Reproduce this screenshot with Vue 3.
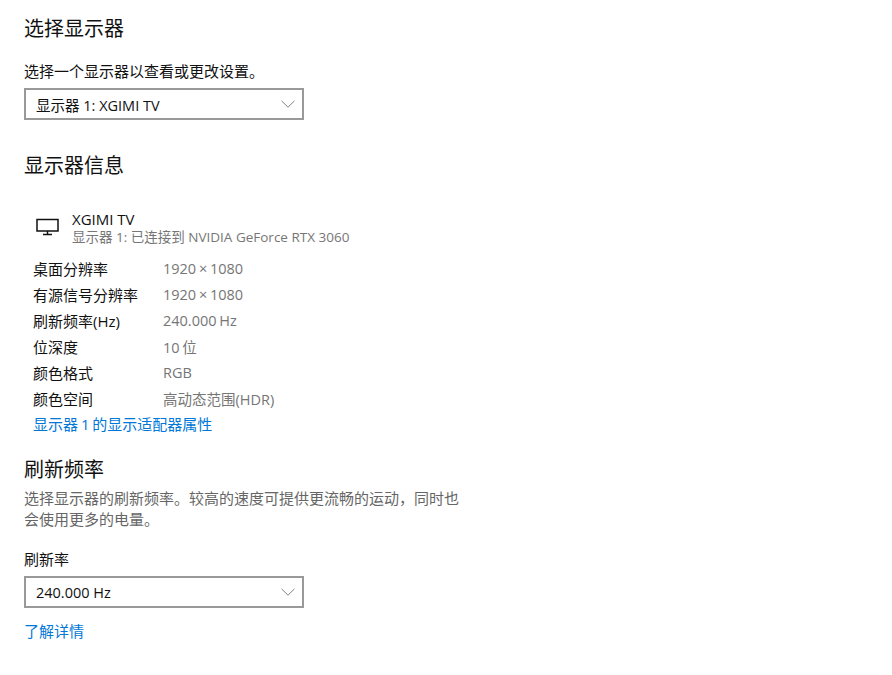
<script setup>
const rows = [
  ['桌面分辨率', '1920 × 1080'],
  ['有源信号分辨率', '1920 × 1080'],
  ['刷新频率(Hz)', '240.000 Hz'],
  ['位深度', '10 位'],
  ['颜色格式', 'RGB'],
  ['颜色空间', '高动态范围(HDR)'],
]
</script>

<template>
  <main class="page">
    <h2 class="title first">选择显示器</h2>
    <p class="label pick">选择一个显示器以查看或更改设置。</p>
    <div class="select">
      <span>显示器 1: XGIMI TV</span>
      <svg class="chev" width="14" height="8" viewBox="0 0 14 8"><path d="M.5.8 7 7.2 13.500.8" fill="none" stroke="#808080" stroke-width="1" /></svg>
    </div>

    <h2 class="title info">显示器信息</h2>
    <div class="monitor">
      <svg class="screen" width="24" height="18" viewBox="0 0 24 18">
        <path d="M1 1.500h21v11.500H1zM11.500 13v3.500M7 16.500h9" fill="none" stroke="#111" stroke-width="1.500" />
      </svg>
      <div class="mon-text">
        <div class="mon-name">XGIMI TV</div>
        <div class="mon-sub">显示器 1: 已连接到 NVIDIA GeForce RTX 3060</div>
      </div>
    </div>
    <dl class="rows">
      <div v-for="r in rows" :key="r[0]" class="row">
        <dt>{{ r[0] }}</dt>
        <dd>{{ r[1] }}</dd>
      </div>
    </dl>
    <a class="link adapter">显示器 1 的显示适配器属性</a>

    <h2 class="title rate">刷新频率</h2>
    <p class="desc">选择显示器的刷新频率。较高的速度可提供更流畅的运动，同时也会使用更多的电量。</p>
    <p class="label rate-label">刷新率</p>
    <div class="select">
      <span>240.000 Hz</span>
      <svg class="chev" width="14" height="8" viewBox="0 0 14 8"><path d="M.5.8 7 7.2 13.500.8" fill="none" stroke="#808080" stroke-width="1" /></svg>
    </div>
    <a class="link more">了解详情</a>
  </main>
</template>

<style>
html, body { margin: 0; background: #fff; }
</style>

<style scoped>
.page {
  box-sizing: border-box;
  width: 892px;
  height: 675px;
  padding: 15px 0 0 24px;
  background: #fff;
  color: #000;
  font-family: "Open Sans", "Noto Sans CJK SC", sans-serif;
  font-size: 15px;
  overflow: hidden;
}
.title {
  margin: 0;
  font-size: 20px;
  font-weight: 400;
  line-height: 28px;
  color: #111;
}
.label {
  margin: 0;
  font-size: 15px;
  line-height: 20px;
  color: #111;
}
.pick { margin-top: 18px; }
.select {
  box-sizing: border-box;
  width: 280px;
  height: 32px;
  margin-top: 7px;
  padding: 0 7px 0 10px;
  border: 2px solid #999;
  display: flex;
  align-items: center;
  justify-content: space-between;
  color: #111;
  font-size: 14.5px;
}
.info { margin-top: 32px; }
.monitor {
  display: flex;
  margin-top: 29px;
  margin-left: 12px;
}
.screen { margin-top: 9px; }
.mon-text { margin-left: 12px; }
.mon-name { line-height: 20px; color: #111; }
.mon-sub { font-size: 13.5px; line-height: 17px; color: #767676; }
.rows { margin: 9px 0 0 9px; }
.row { display: flex; height: 26px; align-items: center; }
dt { width: 130px; color: #111; }
dd { margin: 0; color: #767676; font-size: 14.5px; word-spacing: -1px; }
.link { display: block; color: #0078d7; }
.adapter { margin: 0 0 0 9px; line-height: 26px; word-spacing: -1px; }
.rate { margin-top: 19px; }
.desc {
  margin: 4px 0 0;
  width: 440px;
  font-size: 15px;
  line-height: 21px;
  color: #666;
}
.rate-label { margin-top: 19px; }
.more { margin-top: 13px; line-height: 20px; }
</style>
